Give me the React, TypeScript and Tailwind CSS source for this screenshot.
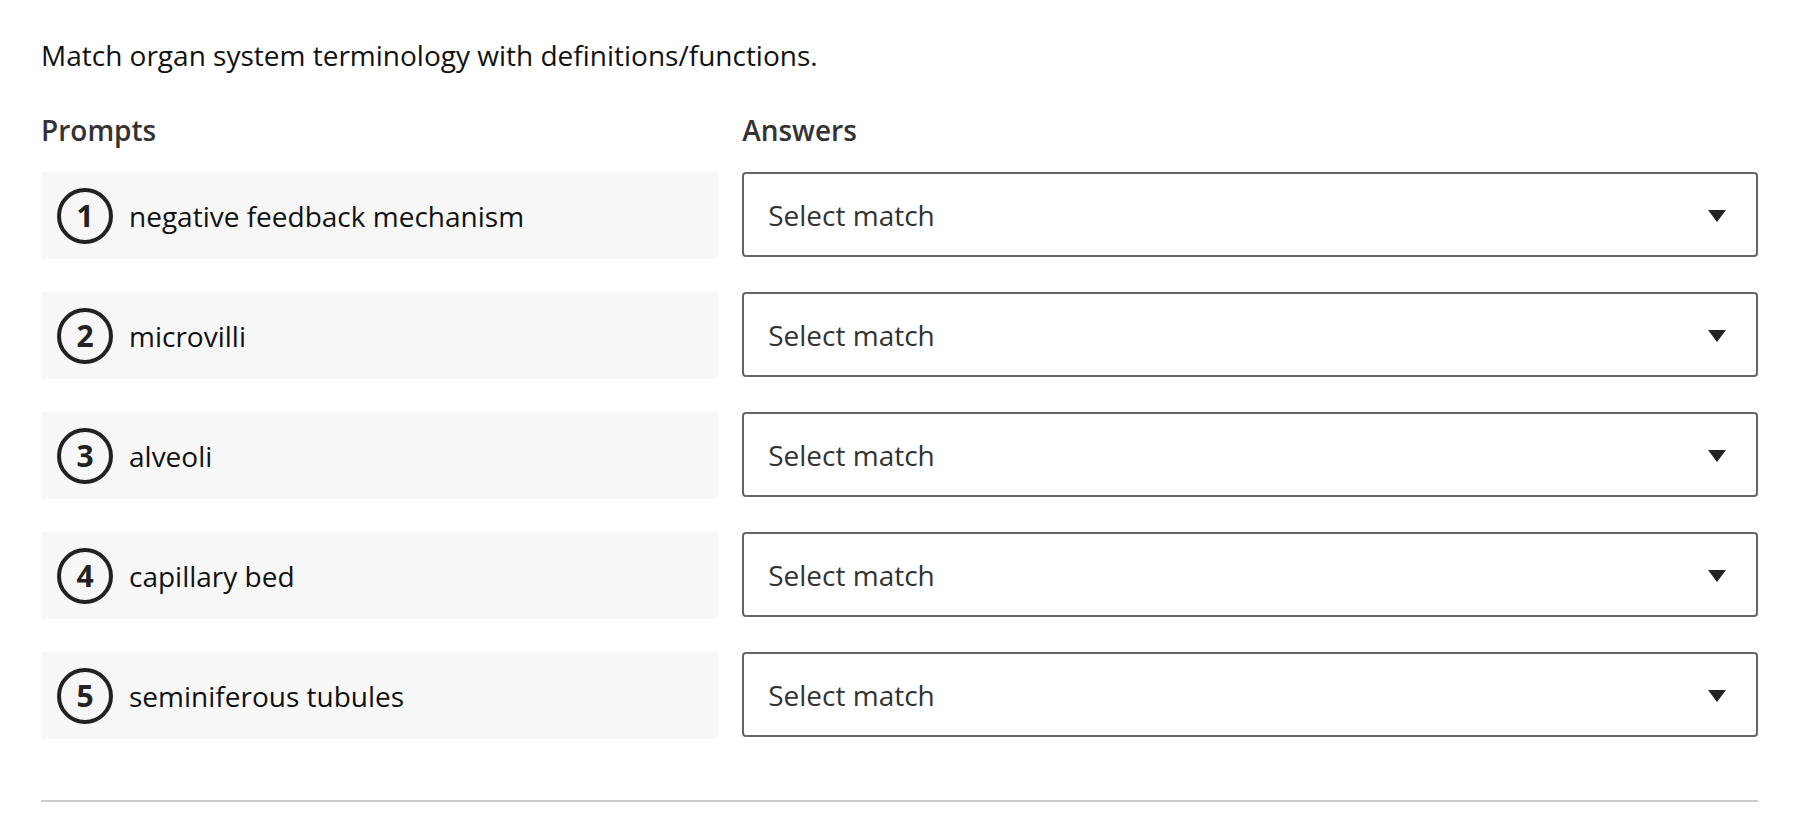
import React from "react";

const prompts = [
  "negative feedback mechanism",
  "microvilli",
  "alveoli",
  "capillary bed",
  "seminiferous tubules",
];

export default function App() {
  return (
    <div className="min-h-[818px] bg-white pl-[41px] pr-[46px] pt-[36px] text-[#111]" style={{ fontFamily: '"Open Sans", "Noto Sans", sans-serif' }}>
      <p className="text-[28px] leading-[38px] text-[#111]">Match organ system terminology with definitions/functions.</p>
      <div className="mt-[37px] grid grid-cols-[2fr_3fr] gap-x-[24px]">
        <div className="text-[28px] font-semibold leading-[38px] text-[#333]">Prompts</div>
        <div className="text-[28px] font-semibold leading-[38px] text-[#333]">Answers</div>
      </div>
      <div className="mt-[23px] flex flex-col gap-[33px]">
        {prompts.map((p, i) => (
          <div key={i} className="grid grid-cols-[2fr_3fr] items-start gap-x-[24px]">
            <div className="flex h-[87px] items-center gap-[16px] rounded-[3px] bg-[#f7f7f7] pl-[16px]">
              <div className="flex h-[56px] w-[56px] shrink-0 items-center justify-center rounded-full border-4 border-[#222] text-[30px] font-bold leading-none text-[#222]">
                {i + 1}
              </div>
              <span className="text-[28px] text-[#111]">{p}</span>
            </div>
            <div className="flex h-[85px] items-center justify-between rounded-[4px] border-2 border-[#666] bg-white pl-[24px] pr-[30px]">
              <span className="text-[28px] text-[#333]">Select match</span>
              <svg width="18" height="12" viewBox="0 0 18 12" className="mt-[3px]">
                <polygon points="0,0 18,0 9,12" fill="#222" />
              </svg>
            </div>
          </div>
        ))}
      </div>
      <div className="mt-[61px] h-[2px] bg-[#cccccc]" />
    </div>
  );
}
